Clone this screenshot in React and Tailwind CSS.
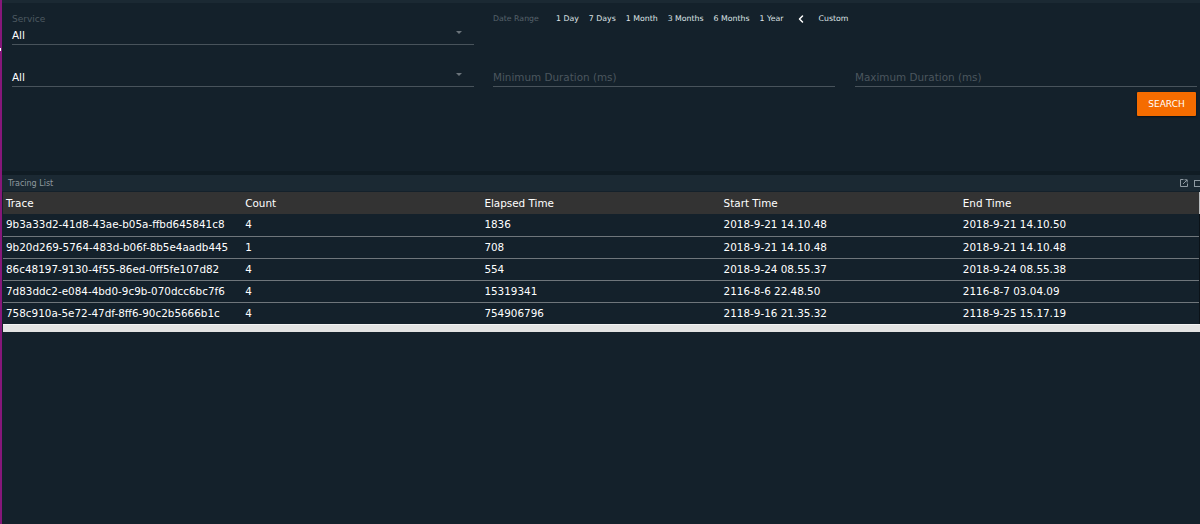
import { ChevronLeft } from 'lucide-react'

const ranges = ['1 Day', '7 Days', '1 Month', '3 Months', '6 Months', '1 Year']

const traces = [
  ['9b3a33d2-41d8-43ae-b05a-ffbd645841c8', '4', '1836', '2018-9-21 14.10.48', '2018-9-21 14.10.50'],
  ['9b20d269-5764-483d-b06f-8b5e4aadb445', '1', '708', '2018-9-21 14.10.48', '2018-9-21 14.10.48'],
  ['86c48197-9130-4f55-86ed-0ff5fe107d82', '4', '554', '2018-9-24 08.55.37', '2018-9-24 08.55.38'],
  ['7d83ddc2-e084-4bd0-9c9b-070dcc6bc7f6', '4', '15319341', '2116-8-6 22.48.50', '2116-8-7 03.04.09'],
  ['758c910a-5e72-47df-8ff6-90c2b5666b1c', '4', '754906796', '2118-9-16 21.35.32', '2118-9-25 15.17.19'],
]

function Caret() {
  return <span className="mr-[12px] h-0 w-0 border-x-[3px] border-t-[3px] border-x-transparent border-t-[#6b747b]" />
}

function SelectField({ label, className, textClass }) {
  return (
    <div className={className}>
      {label && <div className="h-[15px] text-[9px] leading-[16px] text-[#4d5961]">{label}</div>}
      <div className="flex h-[19px] items-start justify-between border-b border-[#48535b] text-[10.4px] text-white">
        <span className={textClass}>All</span>
        <span className="flex h-[12px] items-center">
          <Caret />
        </span>
      </div>
    </div>
  )
}

function DurationField({ placeholder }) {
  return (
    <div className="flex h-[19px] w-[342px] items-center border-b border-[#48535b] pt-[1px] text-[10.4px] text-[#4b565e]">
      {placeholder}
    </div>
  )
}

export default function App() {
  return (
    <div className="flex h-[524px] w-[1200px] overflow-hidden bg-[#14212b] font-['DejaVu_Sans',sans-serif]">
      <div className="relative w-[2px] shrink-0 bg-[#86177a]">
        <div className="absolute left-0 top-[48px] h-[3px] w-[1px] bg-white" />
      </div>
      <div className="flex min-w-0 flex-1 flex-col">
        <div className="h-[3px] shrink-0 bg-[#1b2933]" />

        <div className="h-[168px] shrink-0 pl-[10px]">
          <div className="mt-[8px] flex">
            <SelectField label="Service" className="w-[462px]" textClass="pt-[2px]" />
            <div className="ml-[19px] flex h-[15px] items-center text-[7.8px] text-[#dfe3e6]">
              <span className="w-[63px] text-[#58636b]">Date Range</span>
              <div className="flex gap-[10px]">
                {ranges.map((r) => (
                  <span key={r}>{r}</span>
                ))}
              </div>
              <ChevronLeft className="ml-[11px] h-[12px] w-[12px] text-white" strokeWidth={3} />
              <span className="ml-[12px]">Custom</span>
            </div>
          </div>

          <div className="mt-[23px] flex">
            <SelectField className="w-[462px]" textClass="pt-[2px]" />
            <div className="ml-[19px]">
              <DurationField placeholder="Minimum Duration (ms)" />
            </div>
            <div className="ml-[20px]">
              <DurationField placeholder="Maximum Duration (ms)" />
            </div>
          </div>

          <div className="mr-[4px] mt-[5px] flex justify-end">
            <button className="h-[24px] w-[59px] rounded-[1px] bg-[#f56c00] pt-[2px] text-[9px] text-white shadow-[0_1px_2px_rgba(0,0,0,0.5)]">
              SEARCH
            </button>
          </div>
        </div>

        <div className="h-[4px] shrink-0 bg-[#101c24]" />

        <div className="flex h-[16px] shrink-0 items-center justify-between bg-[#1b2933] pl-[6px]">
          <span className="pt-[1px] text-[8px] text-[#8f999f]">Tracing List</span>
          <div className="flex items-center gap-[6px]">
            <svg width="8" height="8" viewBox="0 0 8 8" fill="none" stroke="#8f9aa2" strokeWidth="1">
              <path d="M3.5.5H.5v7h7V4.5M3 5l4-4M4.5.8h2.7v2.7" />
            </svg>
            <span className="h-[7px] w-[6px] border border-r-0 border-[#8f9aa2]" />
          </div>
        </div>

        <div className="mt-[1px] flex shrink-0 pl-[1px]">
          <div className="min-w-0 flex-1">
            <div className="grid h-[22px] grid-cols-5 items-center bg-[#333333] pt-[1px] text-[10.4px] text-white">
              {['Trace', 'Count', 'Elapsed Time', 'Start Time', 'End Time'].map((h) => (
                <div key={h} className="pl-[3px]">
                  {h}
                </div>
              ))}
            </div>
            {traces.map((row, i) => (
              <div
                key={row[0]}
                className={`grid h-[22px] grid-cols-5 items-center text-[10.4px] text-white ${i > 0 ? 'border-t border-[#6f767b]' : ''}`}
              >
                {row.map((cell, j) => (
                  <div key={j} className="pl-[3px]">
                    {cell}
                  </div>
                ))}
              </div>
            ))}
          </div>
          <div className="flex w-[1px] shrink-0 flex-col bg-[#0b1218]">
            <div className="h-[22px] bg-[#b9bcbe]" />
          </div>
        </div>

        <div className="ml-[1px] h-[8px] shrink-0 border-t border-[#f4f4f4] bg-[#e3e3e3]" />
      </div>
    </div>
  )
}
